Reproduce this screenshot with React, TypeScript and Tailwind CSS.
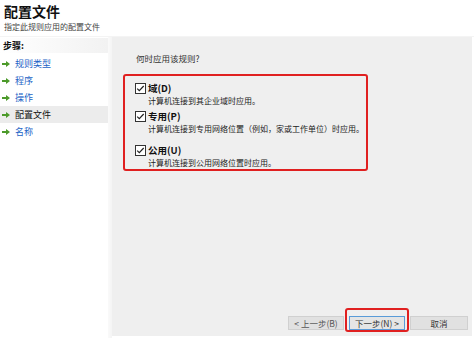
import React from "react";

const font = { fontFamily: '"Noto Sans CJK SC", "Noto Sans", sans-serif' };

const Bullet = () => (
  <svg width="8" height="6" viewBox="0 0 8 6" className="shrink-0">
    <path d="M0 2h4V0l4 3-4 3V4H0z" fill="#4c9a2a" />
  </svg>
);

const Check = () => (
  <svg width="11" height="11" viewBox="0 0 11 11" className="shrink-0">
    <rect x="0.5" y="0.5" width="10" height="10" fill="#fff" stroke="#333" />
    <path d="M2.2 5.6l2.1 2.1 4.4-4.7" fill="none" stroke="#222" strokeWidth="1.2" />
  </svg>
);

const steps = ["规则类型", "程序", "操作", "配置文件", "名称"];

const Option = ({ label, desc }: { label: string; desc: string }) => (
  <div className="flex flex-col">
    <div className="flex items-center gap-[2px] h-[12px]">
      <Check />
      <span className="text-[9.5px] font-bold text-[#111] leading-none">{label}</span>
    </div>
    <div className="pl-[13px] h-[10px] mt-[1px] flex items-center text-[8px] text-[#222] leading-none whitespace-nowrap">
      {desc}
    </div>
  </div>
);

export default function App() {
  return (
    <div className="w-[474px] h-[338px] bg-white flex flex-col overflow-hidden" style={font}>
      <div className="h-[37px] px-[4px] pt-[2px] border-b border-[#f4f4f4]">
        <div className="text-[14px] font-bold text-[#111] leading-[18px]">配置文件</div>
        <div className="text-[8px] text-[#444] leading-[12px] mt-[1px]">指定此规则应用的配置文件</div>
      </div>
      <div className="flex flex-1">
        <div className="w-[108px] flex flex-col">
          <div className="h-[15px] mt-[1px] pl-[3px] flex items-center text-[9px] font-bold text-[#111] bg-gradient-to-r from-white to-[#f2f2f2]">
            步骤:
          </div>
          <div className="flex flex-col mt-[2px]">
            {steps.map((s) => (
              <div
                key={s}
                className={
                  s === "配置文件"
                    ? "h-[17px] flex items-center gap-[5px] pl-[2px] bg-[#ececec] text-[9px] text-[#111]"
                    : "h-[17px] flex items-center gap-[5px] pl-[2px] text-[9px] text-[#1b63c6]"
                }
              >
                <Bullet />
                <span className="leading-none">{s}</span>
              </div>
            ))}
          </div>
        </div>
        <div className="w-[4px] bg-gradient-to-r from-[#fafafa] to-[#f4f4f4]" />
        <div className="flex-1 bg-[#efefef] mb-[2px] mr-[2px] flex flex-col">
          <div className="pl-[24px] pt-[17px] text-[8.5px] text-[#333] leading-none">何时应用该规则?</div>
          <div className="ml-[11px] mt-[11px] w-[245px] h-[97px] border-2 border-[#e02020] rounded-[3px] pl-[10px] pt-[7px] flex flex-col">
            <Option label="域(D)" desc="计算机连接到其企业域时应用。" />
            <div className="mt-[5px]">
              <Option label="专用(P)" desc="计算机连接到专用网络位置（例如，家或工作单位）时应用。" />
            </div>
            <div className="mt-[11px]">
              <Option label="公用(U)" desc="计算机连接到公用网络位置时应用。" />
            </div>
          </div>
          <div className="flex-1" />
          <div className="flex justify-end items-center gap-[5px] pr-[4px] pb-[6px]">
            <div className="w-[56px] h-[14px] bg-[#e1e1e1] border border-[#d0d0d0] flex items-center justify-center text-[8.5px] text-[#555]">
              &lt; 上一步(B)
            </div>
            <div className="relative">
              <div className="w-[56px] h-[14px] bg-[#e5e5e5] border border-[#5a9bd8] flex items-center justify-center text-[8.5px] text-[#333]">
                下一步(N) &gt;
              </div>
              <div className="absolute -left-[4px] -top-[8px] w-[64px] h-[24px] border-2 border-[#e02020] rounded-[3px]" />
            </div>
            <div className="w-[58px] h-[14px] bg-[#e1e1e1] border border-[#d0d0d0] flex items-center justify-center text-[8.5px] text-[#333]">
              取消
            </div>
          </div>
        </div>
      </div>
    </div>
  );
}
